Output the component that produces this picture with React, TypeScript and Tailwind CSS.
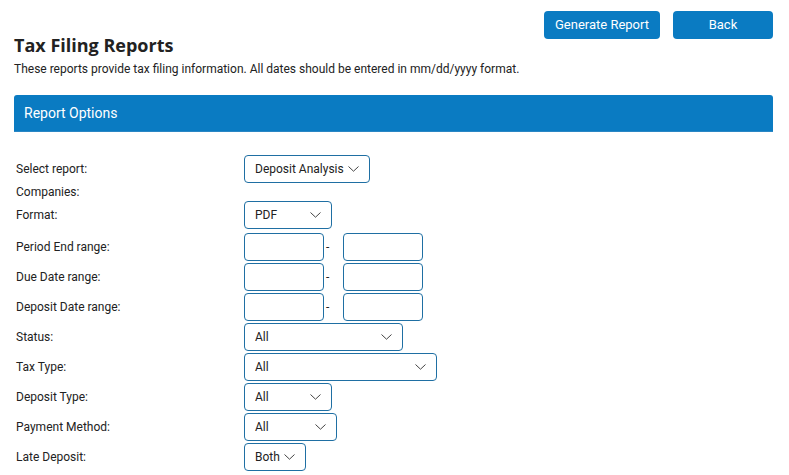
const Chevron = () => (
  <svg width="11" height="6" viewBox="0 0 11 6" fill="none" className="shrink-0">
    <path d="M0.5 0.5L5.5 5.2L10.5 0.5" stroke="#444" strokeWidth="1" />
  </svg>
);

const Select = ({ value, width }: { value: string; width: string }) => (
  <div
    className={`flex h-[28px] items-center justify-between rounded-[4px] border border-[#1f6fa3] bg-white pl-[10px] pr-[10px] text-[12px] text-[#222] ${width}`}
  >
    <span>{value}</span>
    <Chevron />
  </div>
);

const DateRange = () => (
  <div className="flex items-center">
    <div className="h-[28px] w-[80px] rounded-[4px] border border-[#1f6fa3] bg-white" />
    <span className="w-[19px] pl-[2px] text-[12px] text-[#222]">-</span>
    <div className="h-[28px] w-[80px] rounded-[4px] border border-[#1f6fa3] bg-white" />
  </div>
);

const Row = ({ label, children, className = "" }: { label: string; children?: React.ReactNode; className?: string }) => (
  <div className={`flex items-center ${className}`}>
    <div className="w-[228px] text-[12px] text-[#222]">{label}</div>
    {children}
  </div>
);

const App = () => {
  return (
    <div className="min-h-[475px] w-[789px] bg-white font-['Roboto',sans-serif]">
      <div className="ml-[14px] w-[759px]">
        <div className="flex justify-between">
          <div className="pt-[33px]">
            <h1 className="font-['Open_Sans',sans-serif] text-[18px] font-bold leading-[24px] text-[#222]">
              Tax Filing Reports
            </h1>
            <p className="mt-[4px] text-[12px] leading-[16px] text-[#222]">
              These reports provide tax filing information. All dates should be entered in mm/dd/yyyy format.
            </p>
          </div>
          <div className="flex gap-[13px] pt-[11px]">
            <button className="h-[28px] w-[116px] rounded-[4px] bg-[#0a7bc2] text-[13px] text-white">
              Generate Report
            </button>
            <button className="h-[28px] w-[100px] rounded-[4px] bg-[#0a7bc2] text-[13px] text-white">
              Back
            </button>
          </div>
        </div>

        <div className="mt-[18px] flex h-[37px] items-center rounded-t-[3px] border-b border-[#2a86c4] bg-[#0a7bc2] pl-[10px] text-[14px] text-white">
          Report Options
        </div>

        <div className="flex flex-col gap-[2px] pl-[2px] pt-[23px]">
          <Row label="Select report:">
            <Select value="Deposit Analysis" width="w-[126px]" />
          </Row>
          <Row label="Companies:" className="h-[14px]" />
          <Row label="Format:">
            <Select value="PDF" width="w-[88px]" />
          </Row>
          <Row label="Period End range:" className="mt-[2px]">
            <DateRange />
          </Row>
          <Row label="Due Date range:">
            <DateRange />
          </Row>
          <Row label="Deposit Date range:">
            <DateRange />
          </Row>
          <Row label="Status:">
            <Select value="All" width="w-[159px]" />
          </Row>
          <Row label="Tax Type:">
            <Select value="All" width="w-[193px]" />
          </Row>
          <Row label="Deposit Type:">
            <Select value="All" width="w-[88px]" />
          </Row>
          <Row label="Payment Method:">
            <Select value="All" width="w-[93px]" />
          </Row>
          <Row label="Late Deposit:">
            <Select value="Both" width="w-[62px]" />
          </Row>
        </div>
      </div>
    </div>
  );
};

export default App;
